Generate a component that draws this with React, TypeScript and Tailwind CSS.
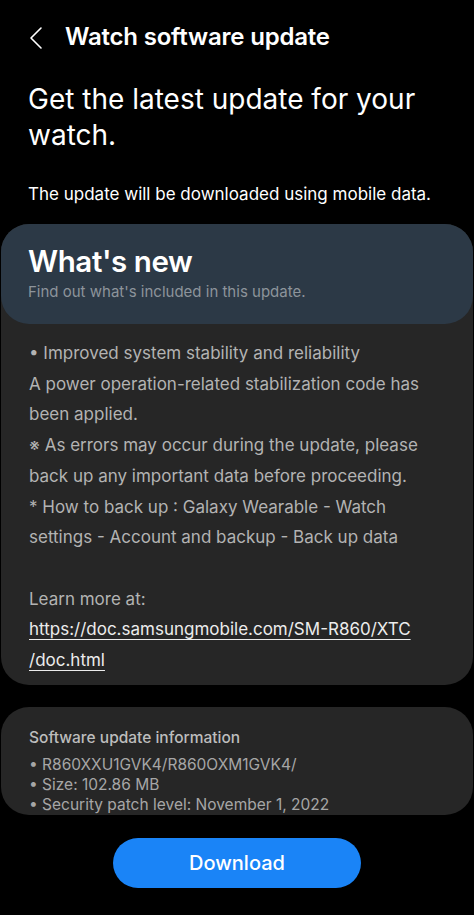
const notes = [
  "• Improved system stability and reliability",
  "A power operation-related stabilization code has been applied.",
  "※ As errors may occur during the update, please back up any important data before proceeding.",
  "* How to back up : Galaxy Wearable - Watch settings - Account and backup - Back up data",
];

const info = [
  "• R860XXU1GVK4/R860OXM1GVK4/",
  "• Size: 102.86 MB",
  "• Security patch level: November 1, 2022",
];

export default function App() {
  return (
    <div
      className="flex h-[915px] w-[474px] flex-col overflow-hidden bg-black text-white"
      style={{ fontFamily: "Inter, 'Noto Sans', sans-serif" }}
    >
      <div className="flex h-[74px] items-center pl-[29px]">
        <svg width="14" height="24" viewBox="0 0 14 24" fill="none" className="mt-[1px]">
          <polyline
            points="12,2 2,12 12,22"
            stroke="white"
            strokeWidth="1.6"
            strokeLinecap="round"
            strokeLinejoin="round"
          />
        </svg>
        <h1 className="ml-[22px] text-[24px] font-semibold tracking-[-0.2px]">
          Watch software update
        </h1>
      </div>

      <h2 className="mt-[7px] px-[28px] text-[28px] leading-[36px] font-normal">
        Get the latest update for your watch.
      </h2>

      <p className="mt-[29px] px-[28px] text-[17px] leading-[24px]">
        The update will be downloaded using mobile data.
      </p>

      <div className="mx-[1px] mt-[18px] rounded-[28px] bg-[#262626]">
        <div className="flex h-[100px] flex-col justify-center rounded-[28px] bg-[#2c3946] px-[27px]">
          <div className="text-[29.5px] leading-[34px] font-semibold tracking-[-0.4px]">What's new</div>
          <div className="mt-[3px] text-[15px] text-[#8d949b]">
            Find out what's included in this update.
          </div>
        </div>
        <div className="px-[28px] pt-[14px] pb-[9px] text-[17px] leading-[30.7px] text-[#b3b3b3]">
          {notes.map((n) => (
            <p key={n}>{n}</p>
          ))}
          <p className="mt-[30.7px]">Learn more at:</p>
          <p className="text-[#ececec] underline underline-offset-[4px]">
            https://doc.samsungmobile.com/SM-R860/XTC
            <br />
            /doc.html
          </p>
        </div>
      </div>

      <div className="mx-[1px] mt-[22px] h-[108px] overflow-hidden rounded-[28px] bg-[#262626] px-[28px] pt-[20px]">
        <div className="text-[15.5px] leading-[22px] font-medium text-[#bdbdbd]">
          Software update information
        </div>
        <div className="mt-[6px] text-[15.5px] leading-[20px] text-[#a6a6a6]">
          {info.map((i) => (
            <p key={i}>{i}</p>
          ))}
        </div>
      </div>

      <div className="mt-[23px] flex justify-center">
        <button className="h-[50px] w-[248px] rounded-full bg-[#1a84f7] text-[20px] font-medium text-white">
          Download
        </button>
      </div>
    </div>
  );
}
